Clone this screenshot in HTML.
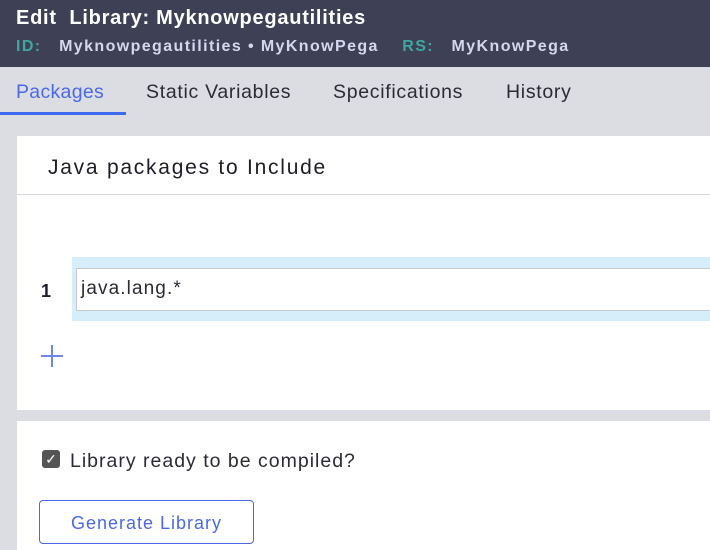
<!DOCTYPE html>
<html><head><style>
*{margin:0;padding:0;box-sizing:border-box}
body{width:710px;height:550px;overflow:hidden;background:#dcdde2;font-family:"Liberation Sans",sans-serif;position:relative}
.hdr{position:absolute;left:0;top:0;width:710px;height:67px;background:#3e4056}
.t1{position:absolute;left:16px;top:7px;color:#fff;font-size:20px;font-weight:bold;white-space:nowrap;letter-spacing:0.75px}
.t2{position:absolute;left:16px;top:38px;font-size:16px;font-weight:bold;color:#d3d8ef;white-space:nowrap;letter-spacing:1.4px}
.t2 b{color:#3fa7a0}
.tab{position:absolute;top:81px;font-size:19.5px;color:#2b2b35;white-space:nowrap;letter-spacing:0.7px}
.ul{position:absolute;left:0;top:112px;width:126px;height:3px;background:#3d6af0}
.card{position:absolute;background:#fff;left:17px;width:693px}
</style></head><body>
<div class="hdr">
<div class="t1">Edit&nbsp; Library: Myknowpegautilities</div>
<div class="t2"><b>ID:</b>&nbsp;&nbsp; Myknowpegautilities • MyKnowPega&nbsp;&nbsp;&nbsp; <b>RS:</b>&nbsp;&nbsp; MyKnowPega</div>
</div>
<div class="tab" style="left:16px;color:#4a68e8;letter-spacing:0.3px">Packages</div>
<div class="tab" style="left:146px">Static Variables</div>
<div class="tab" style="left:333px">Specifications</div>
<div class="tab" style="left:506px">History</div>
<div class="ul"></div>
<div class="card" style="top:136px;height:274px">
<div style="position:absolute;left:31px;top:20px;font-size:21px;color:#1e1e28;letter-spacing:1.75px">Java packages to Include</div>
<div style="position:absolute;left:0;top:58px;width:693px;height:1px;background:#d5d5da"></div>
<div style="position:absolute;left:55px;top:121px;width:640px;height:64px;background:#d6eef9"></div>
<div style="position:absolute;left:59px;top:132px;width:640px;height:43px;background:#fff;border:1px solid #c8c8cc"></div>
<div style="position:absolute;left:24px;top:145px;font-size:18px;font-weight:bold;color:#1e1e28">1</div>
<div style="position:absolute;left:64px;top:142px;font-size:19px;color:#2b2b35;letter-spacing:1.1px">java.lang.*</div>
<div style="position:absolute;left:24px;top:219px;width:22px;height:2px;background:#6f86ee"></div>
<div style="position:absolute;left:34px;top:209px;width:2px;height:22px;background:#6f86ee"></div>
</div>
<div class="card" style="top:421px;height:129px">
<div style="position:absolute;left:25px;top:29px;width:18px;height:18px;background:#555;border-radius:3px;color:#fff;font-size:14px;line-height:18px;text-align:center">✓</div>
<div style="position:absolute;left:53px;top:29px;font-size:19.5px;color:#2b2b35;letter-spacing:1px">Library ready to be compiled?</div>
<div style="position:absolute;left:22px;top:79px;width:215px;height:44px;border:1px solid #4a68e8;border-radius:4px;color:#4a68e8;font-size:18px;text-align:center;line-height:44px;letter-spacing:1px">Generate Library</div>
</div>
</body></html>
